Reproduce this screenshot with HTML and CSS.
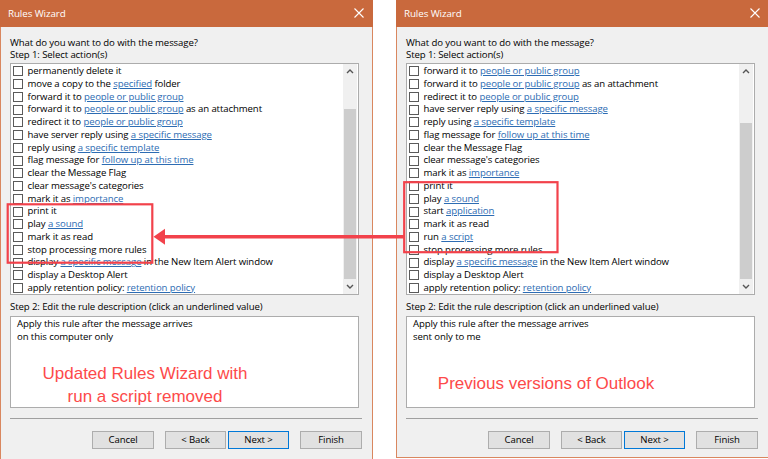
FILE: index.html
```html
<!DOCTYPE html>
<html lang="en">
<head>
<meta charset="utf-8">
<title>Rules Wizard comparison</title>
<link rel="stylesheet" href="styles.css">
</head>
<body>
<div class="stage">
  <div class="dialog dialog-left">
    <div class="titlebar">
      <span class="title">Rules Wizard</span>
      <svg class="close" viewBox="0 0 10 10" width="10" height="10"><path d="M0.5 0.5 L9.5 9.5 M9.5 0.5 L0.5 9.5" stroke="#fff" stroke-width="1.1" fill="none"/></svg>
    </div>
    <div class="body">
      <div class="label q">What do you want to do with the message?</div>
      <div class="label">Step 1: Select action(s)</div>
      <div class="listbox">
        <ul class="items">
          <li><span class="cb"></span>permanently delete it</li>
          <li><span class="cb"></span>move a copy to the&nbsp;<a>specified</a>&nbsp;folder</li>
          <li><span class="cb"></span>forward it to&nbsp;<a>people or public group</a></li>
          <li><span class="cb"></span>forward it to&nbsp;<a>people or public group</a>&nbsp;as an attachment</li>
          <li><span class="cb"></span>redirect it to&nbsp;<a>people or public group</a></li>
          <li><span class="cb"></span>have server reply using&nbsp;<a>a specific message</a></li>
          <li><span class="cb"></span>reply using&nbsp;<a>a specific template</a></li>
          <li><span class="cb"></span>flag message for&nbsp;<a>follow up at this time</a></li>
          <li><span class="cb"></span>clear the Message Flag</li>
          <li><span class="cb"></span>clear message's categories</li>
          <li><span class="cb"></span>mark it as&nbsp;<a>importance</a></li>
          <li><span class="cb"></span>print it</li>
          <li><span class="cb"></span>play&nbsp;<a>a sound</a></li>
          <li><span class="cb"></span>mark it as read</li>
          <li><span class="cb"></span>stop processing more rules</li>
          <li><span class="cb"></span>display&nbsp;<a>a specific message</a>&nbsp;in the New Item Alert window</li>
          <li><span class="cb"></span>display a Desktop Alert</li>
          <li><span class="cb"></span>apply retention policy:&nbsp;<a>retention policy</a></li>
        </ul>
        <div class="scrollbar">
          <svg class="sb-btn" viewBox="0 0 14 15" width="14" height="15"><path d="M4 9 L7 6 L10 9" stroke="#555" stroke-width="1.4" fill="none"/></svg>
          <div class="track"><div class="thumb thumb-left"></div></div>
          <svg class="sb-btn" viewBox="0 0 14 15" width="14" height="15"><path d="M4 6 L7 9 L10 6" stroke="#555" stroke-width="1.4" fill="none"/></svg>
        </div>
      </div>
      <div class="label step2">Step 2: Edit the rule description (click an underlined value)</div>
      <div class="desc">
        <div class="line">Apply this rule after the message arrives</div>
        <div class="line">on this computer only</div>
        <div class="note note-left">Updated Rules Wizard with<br>run a script removed</div>
      </div>
      <div class="sep"></div>
      <div class="buttons">
        <span class="btn">Cancel</span>
        <span class="btn back">&lt; Back</span>
        <span class="btn next">Next &gt;</span>
        <span class="btn finish">Finish</span>
      </div>
    </div>
  </div>

  <div class="dialog dialog-right">
    <div class="titlebar">
      <span class="title">Rules Wizard</span>
      <svg class="close" viewBox="0 0 10 10" width="10" height="10"><path d="M0.5 0.5 L9.5 9.5 M9.5 0.5 L0.5 9.5" stroke="#fff" stroke-width="1.1" fill="none"/></svg>
    </div>
    <div class="body">
      <div class="label q">What do you want to do with the message?</div>
      <div class="label">Step 1: Select action(s)</div>
      <div class="listbox">
        <ul class="items">
          <li><span class="cb"></span>forward it to&nbsp;<a>people or public group</a></li>
          <li><span class="cb"></span>forward it to&nbsp;<a>people or public group</a>&nbsp;as an attachment</li>
          <li><span class="cb"></span>redirect it to&nbsp;<a>people or public group</a></li>
          <li><span class="cb"></span>have server reply using&nbsp;<a>a specific message</a></li>
          <li><span class="cb"></span>reply using&nbsp;<a>a specific template</a></li>
          <li><span class="cb"></span>flag message for&nbsp;<a>follow up at this time</a></li>
          <li><span class="cb"></span>clear the Message Flag</li>
          <li><span class="cb"></span>clear message's categories</li>
          <li><span class="cb"></span>mark it as&nbsp;<a>importance</a></li>
          <li><span class="cb"></span>print it</li>
          <li><span class="cb"></span>play&nbsp;<a>a sound</a></li>
          <li><span class="cb"></span>start&nbsp;<a>application</a></li>
          <li><span class="cb"></span>mark it as read</li>
          <li><span class="cb"></span>run&nbsp;<a>a script</a></li>
          <li><span class="cb"></span>stop processing more rules</li>
          <li><span class="cb"></span>display&nbsp;<a>a specific message</a>&nbsp;in the New Item Alert window</li>
          <li><span class="cb"></span>display a Desktop Alert</li>
          <li><span class="cb"></span>apply retention policy:&nbsp;<a>retention policy</a></li>
        </ul>
        <div class="scrollbar">
          <svg class="sb-btn" viewBox="0 0 14 15" width="14" height="15"><path d="M4 9 L7 6 L10 9" stroke="#555" stroke-width="1.4" fill="none"/></svg>
          <div class="track"><div class="thumb thumb-right"></div></div>
          <svg class="sb-btn" viewBox="0 0 14 15" width="14" height="15"><path d="M4 6 L7 9 L10 6" stroke="#555" stroke-width="1.4" fill="none"/></svg>
        </div>
      </div>
      <div class="label step2">Step 2: Edit the rule description (click an underlined value)</div>
      <div class="desc">
        <div class="line">Apply this rule after the message arrives</div>
        <div class="line">sent only to me</div>
        <div class="note note-right">Previous versions of Outlook</div>
      </div>
      <div class="sep"></div>
      <div class="buttons">
        <span class="btn">Cancel</span>
        <span class="btn back">&lt; Back</span>
        <span class="btn next">Next &gt;</span>
        <span class="btn finish">Finish</span>
      </div>
    </div>
  </div>

  <svg class="annot" viewBox="0 0 768 459" width="768" height="459">
    <rect x="7.7" y="204.3" width="144.6" height="58.4" fill="none" stroke="#f2424b" stroke-width="2.2"/>
    <rect x="404.2" y="182.2" width="153.3" height="70" fill="none" stroke="#f2424b" stroke-width="2.2"/>
    <path d="M163 236.8 L404 236.8" stroke="#f2424b" stroke-width="3.6" fill="none"/>
    <path d="M153.5 236.8 L165 228.8 L165 244.8 Z" fill="#f2424b"/>
  </svg>
</div>
</body>
</html>
```

FILE: styles.css
```css
* { box-sizing: border-box; }

html, body {
  margin: 0;
  padding: 0;
  background: #ffffff;
}

body {
  width: 768px;
  height: 459px;
  overflow: hidden;
  font-family: "Open Sans", "Noto Sans", "DejaVu Sans", sans-serif;
  font-size: 9.6px;
  letter-spacing: -0.1px;
  color: #000000;
}

.stage {
  position: relative;
  width: 768px;
  height: 459px;
  display: flex;
  align-items: flex-start;
  gap: 23px;
}

.dialog {
  flex: none;
  width: 373px;
  background: #f0f0f0;
  border: 1px solid #d9875f;
  border-top: none;
  display: flex;
  flex-direction: column;
}

.dialog-left { height: 462px; }
.dialog-right { height: 458px; }

.titlebar {
  height: 27px;
  margin: 0 -1px;
  background: #c9693d;
  color: #ffffff;
  display: flex;
  align-items: center;
  justify-content: space-between;
  padding: 0 9px 1px 8px;
}

.title {
  font-size: 9.8px;
}

.close {
  display: block;
}

.body {
  padding: 0 9px;
  display: flex;
  flex-direction: column;
}

.label {
  line-height: 12.75px;
  white-space: nowrap;
}

.q { margin-top: 9.5px; }

.listbox {
  margin-top: 1px;
  width: 349px;
  height: 232px;
  background: #ffffff;
  border: 1px solid #acacac;
  display: flex;
}

.items {
  list-style: none;
  margin: 0;
  padding: 1px 0 0 2px;
  flex: 1;
}

.items li {
  height: 12.75px;
  line-height: 12.75px;
  display: flex;
  align-items: center;
  white-space: nowrap;
}

.cb {
  flex: none;
  width: 10px;
  height: 10px;
  border: 1px solid #5a5a5a;
  background: #ffffff;
  margin-right: 4.5px;
}

a {
  color: #2d6cb3;
  text-decoration: underline;
  text-underline-offset: 1px;
}

.scrollbar {
  flex: none;
  width: 14px;
  margin-right: 1px;
  background: #f0f0f0;
  display: flex;
  flex-direction: column;
}

.sb-btn {
  display: block;
  flex: none;
}

.track {
  flex: 1;
  display: flex;
  flex-direction: column;
  justify-content: flex-end;
  padding: 0 1px;
}

.thumb {
  background: #cdcdcd;
}

.thumb-left { height: 170px; }
.thumb-right { height: 156px; }

.step2 { margin-top: 5.5px; }

.desc {
  margin-top: 2.5px;
  width: 349px;
  height: 92px;
  background: #ffffff;
  border: 1px solid #acacac;
  padding: 1px 0 0 6px;
}

.line {
  line-height: 12.75px;
}

.note {
  font-family: "Liberation Sans", Arial, sans-serif;
  font-size: 17px;
  letter-spacing: 0;
  line-height: 23px;
  color: #fd4a4a;
  text-align: center;
}

.note-left {
  margin-top: 19px;
  width: 268px;
  margin-left: -6px;
}

.note-right {
  margin-top: 29px;
  width: 278px;
  margin-left: -6px;
}

.sep {
  margin-top: 10px;
  width: 352px;
  height: 1px;
  background: #a0a0a0;
}

.buttons {
  margin-top: 12px;
  display: flex;
  justify-content: flex-end;
  width: 352px;
}

.btn {
  width: 62px;
  height: 18px;
  background: #e1e1e1;
  border: 1px solid #adadad;
  display: flex;
  align-items: center;
  justify-content: center;
  line-height: 1;
  margin-left: 11px;
}

.btn.back,
.btn.next {
  width: 61px;
}

.btn.next {
  margin-left: 2px;
  border-color: #0078d7;
}

.annot {
  position: absolute;
  left: 0;
  top: 0;
  pointer-events: none;
}
```
